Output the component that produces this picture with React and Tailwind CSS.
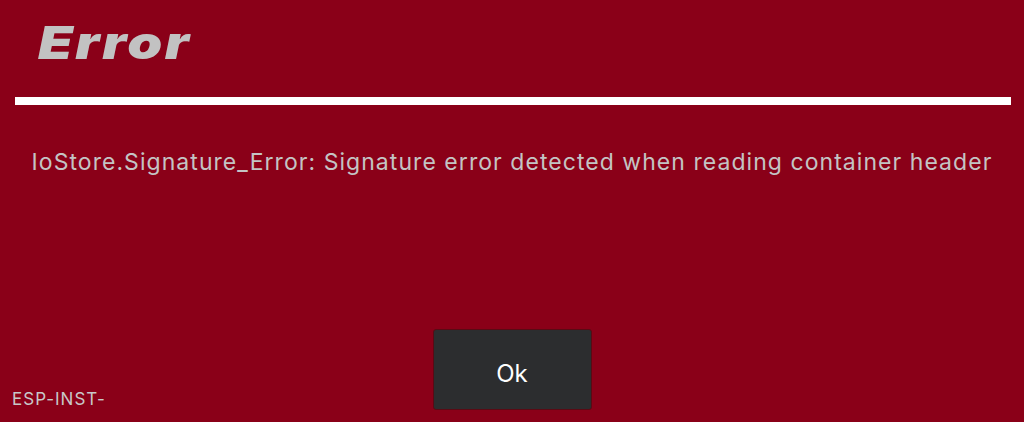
import React from "react";

const App = () => {
  return (
    <div className="w-[1024px] h-[422px] bg-[#8a0018] flex flex-col overflow-hidden">
      {/* Title */}
      <h1 className="pl-[38px] pt-[14px] h-[82px] font-['Inter',sans-serif] text-[46px] leading-[56px] font-black italic text-[#c2c2c2] tracking-[2px]">
        <span className="inline-block origin-left scale-x-[1.22]">Error</span>
      </h1>

      {/* Divider */}
      <div className="ml-[15px] mr-[13px] mt-[15px] h-[8px] bg-white" />

      {/* Message */}
      <p className="mt-[42px] text-center font-['Inter',sans-serif] text-[23px] leading-[30px] tracking-[1.05px] text-[#c4c4c4]">
        IoStore.Signature_Error: Signature error detected when reading container header
      </p>

      {/* Footer */}
      <div className="mt-auto grid grid-cols-[1fr_auto_1fr] items-end pb-[12px]">
        <span className="pl-[12px] pb-[1px] font-['Inter',sans-serif] text-[17px] leading-[20px] tracking-[1px] text-[#c8c8c8]">
          ESP-INST-
        </span>
        <button className="w-[159px] h-[81px] pt-[8px] rounded-[3px] bg-[#2c2d2f] border border-[#5a0a14] font-['Inter',sans-serif] text-[24px] text-white">
          Ok
        </button>
        <div />
      </div>
    </div>
  );
};

export default App;
